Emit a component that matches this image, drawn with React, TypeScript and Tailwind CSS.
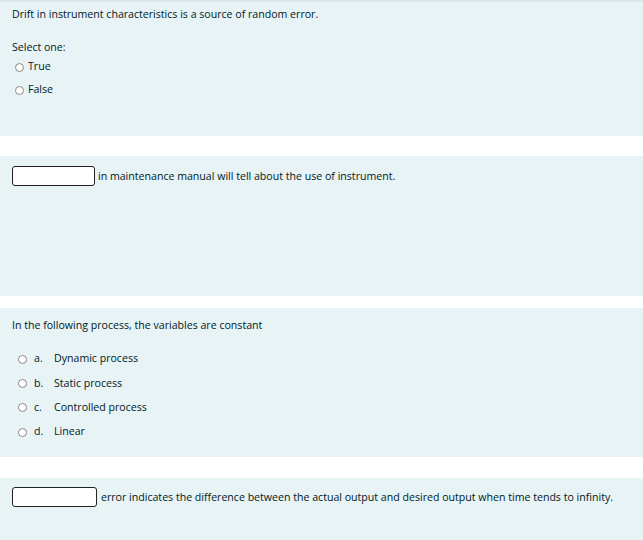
import React from "react";

const Radio = () => (
  <span className="inline-block w-[9px] h-[9px] rounded-full border border-[#8a8a8a] bg-white shrink-0" />
);

const options = [
  { letter: "a.", label: "Dynamic process" },
  { letter: "b.", label: "Static process" },
  { letter: "c.", label: "Controlled process" },
  { letter: "d.", label: "Linear" },
];

export default function App() {
  return (
    <div
      className="w-[643px] h-[540px] overflow-hidden bg-white text-[#001a1e] text-[10.6px]"
      style={{ fontFamily: '"Open Sans", "Noto Sans", sans-serif' }}
    >
      {/* question 1 */}
      <div className="h-[136px] bg-[#e7f3f5] border-t-2 border-[#dbe7e9] pl-3 pt-[5px]">
        <div className="h-4 flex items-center">
          Drift in instrument characteristics is a source of random error.
        </div>
        <div className="h-4 flex items-center mt-[17px]">Select one:</div>
        <div className="h-4 flex items-center gap-[4px] ml-[3px] mt-[3px]">
          <Radio />
          <span>True</span>
        </div>
        <div className="h-4 flex items-center gap-[4px] ml-[3px] mt-[7px]">
          <Radio />
          <span>False</span>
        </div>
      </div>

      {/* question 2 */}
      <div className="h-[140px] mt-[20px] bg-[#e7f3f5] pl-3 pt-[10px]">
        <div className="flex items-center">
          <input
            type="text"
            className="w-[83px] h-[20px] rounded-[3px] border border-[#222] bg-white outline-none"
          />
          <span className="ml-[3px] mt-[2px]">
            in maintenance manual will tell about the use of instrument.
          </span>
        </div>
      </div>

      {/* question 3 */}
      <div className="h-[149px] mt-[12px] bg-[#e7f3f5] pl-3 pt-[10px]">
        <div className="h-4 flex items-center">
          In the following process, the variables are constant
        </div>
        <div className="mt-[13px] flex flex-col">
          {options.map((o) => (
            <div key={o.letter} className="h-[24.3px] flex items-center ml-[6px]">
              <Radio />
              <span className="ml-[7px] w-[20px]">{o.letter}</span>
              <span>{o.label}</span>
            </div>
          ))}
        </div>
      </div>

      {/* question 4 */}
      <div className="h-[80px] mt-[21px] bg-[#e7f3f5] pl-3 pt-[9px]">
        <div className="flex items-center">
          <input
            type="text"
            className="w-[85px] h-[20px] rounded-[3px] border border-[#222] bg-white outline-none"
          />
          <span className="ml-[4px] mt-[2px]">
            error indicates the difference between the actual output and desired output when time tends to infinity.
          </span>
        </div>
      </div>
    </div>
  );
}
